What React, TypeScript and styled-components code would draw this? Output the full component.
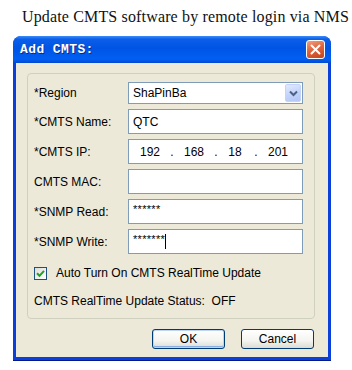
import React from 'react';
import styled, { createGlobalStyle } from 'styled-components';

const GlobalStyle = createGlobalStyle`
  html, body {
    margin: 0;
    padding: 0;
    background: #ffffff;
  }
`;

const Page = styled.div`
  width: 352px;
  height: 370px;
  overflow: hidden;
  display: flex;
  flex-direction: column;
`;

const Caption = styled.div`
  height: 36px;
  padding-left: 22px;
  display: flex;
  align-items: center;
  font-family: 'Liberation Serif', 'Times New Roman', serif;
  font-size: 16px;
  letter-spacing: 0.15px;
  color: #111;
  padding-bottom: 2px;
  box-sizing: border-box;
`;

const Window = styled.div`
  margin-left: 13px;
  width: 318px;
  height: 325px;
  display: flex;
  flex-direction: column;
  background: #0a3fd9;
  border-radius: 8px 8px 0 0;
  box-sizing: border-box;
  padding: 0 3px 3px 3px;
  border-bottom: 1px solid #001a8c;
`;

const TitleBar = styled.div`
  height: 27px;
  margin: 0 -3px;
  padding: 0 6px 0 7px;
  border-radius: 8px 8px 0 0;
  background: linear-gradient(
    180deg,
    #3c8cf6 0%,
    #0a5ee8 12%,
    #0054e3 45%,
    #0060f4 85%,
    #0048d0 100%
  );
  display: flex;
  align-items: center;
  justify-content: space-between;
`;

const Title = styled.span`
  font-family: 'Liberation Mono', 'DejaVu Sans Mono', monospace;
  font-weight: bold;
  font-size: 13px;
  letter-spacing: 0.4px;
  color: #ffffff;
  text-shadow: 1px 1px 0 #0a2a8a;
`;

const CloseButton = styled.div`
  width: 19px;
  height: 19px;
  box-sizing: border-box;
  border: 1px solid #ffffff;
  border-radius: 3px;
  background: linear-gradient(160deg, #f0a184 0%, #e0663f 45%, #c4421c 100%);
  display: flex;
  align-items: center;
  justify-content: center;
`;

const Body = styled.div`
  flex: 1;
  background: #ece9d8;
  padding: 10px 13px 0 11px;
  display: flex;
  flex-direction: column;
`;

const Group = styled.div`
  height: 246px;
  box-sizing: border-box;
  border: 1px solid #d0d0bf;
  border-radius: 4px;
  padding: 7px 11px 0 6px;
  display: flex;
  flex-direction: column;
`;

const Row = styled.div<{ gap: number }>`
  display: flex;
  align-items: center;
  margin-top: ${(p) => p.gap}px;
`;

const Label = styled.div`
  width: 94px;
  font-family: 'Liberation Sans', Arial, sans-serif;
  font-size: 12px;
  color: #000;
`;

const Field = styled.div<{ h: number }>`
  width: 175px;
  height: ${(p) => p.h}px;
  box-sizing: border-box;
  border: 1px solid #7f9db9;
  background: #ffffff;
  display: flex;
  align-items: center;
  padding-left: 4px;
  font-family: 'Liberation Sans', Arial, sans-serif;
  font-size: 12px;
  color: #000;
`;

const SelectArrow = styled.div`
  margin-left: auto;
  margin-right: 1px;
  width: 16px;
  height: 18px;
  box-sizing: border-box;
  border: 1px solid #c3d3fd;
  border-radius: 2px;
  background: linear-gradient(160deg, #e2eafe 0%, #c4d4fb 50%, #b2c6f6 100%);
  display: flex;
  align-items: center;
  justify-content: center;
`;

const IpPart = styled.span<{ w: number }>`
  display: inline-block;
  width: ${(p) => p.w}px;
  text-align: center;
`;

const Masked = styled.span`
  font-family: 'Liberation Sans', Arial, sans-serif;
  font-size: 11px;
  letter-spacing: 0.3px;
  position: relative;
  top: -3px;
`;

const Caret = styled.span`
  display: inline-block;
  width: 1px;
  height: 15px;
  background: #000;
  margin-left: 0;
`;

const CheckRow = styled.div`
  display: flex;
  align-items: center;
  margin-top: 12px;
  gap: 9px;
  font-family: 'Liberation Sans', Arial, sans-serif;
  font-size: 12px;
  color: #000;
`;

const CheckBox = styled.div`
  width: 13px;
  height: 13px;
  box-sizing: border-box;
  border: 1px solid #1c5180;
  background: linear-gradient(135deg, #dcdcd7 0%, #ffffff 100%);
  display: flex;
  align-items: center;
  justify-content: center;
`;

const Status = styled.div`
  margin-top: 14px;
  font-family: 'Liberation Sans', Arial, sans-serif;
  font-size: 12px;
  color: #000;
  white-space: pre;
`;

const Buttons = styled.div`
  display: flex;
  justify-content: flex-end;
  gap: 16px;
  margin-top: 10px;
  padding-right: 1px;
`;

const Button = styled.div<{ primary?: boolean }>`
  width: 73px;
  height: 20px;
  box-sizing: border-box;
  border: 1px solid #003c74;
  border-radius: 3px;
  background: linear-gradient(180deg, #ffffff 0%, #f4f4f0 60%, #dcdbd3 100%);
  box-shadow: ${(p) =>
    p.primary ? 'inset 0 0 0 1px #bcd4f6, inset 0 -1px 0 1px #89ade4' : 'none'};
  display: flex;
  align-items: center;
  justify-content: center;
  font-family: 'Liberation Sans', Arial, sans-serif;
  font-size: 12px;
  color: #000;
`;

const App = () => {
  return (
    <Page>
      <GlobalStyle />
      <Caption>Update CMTS software by remote login via NMS</Caption>
      <Window>
        <TitleBar>
          <Title>Add CMTS:</Title>
          <CloseButton>
            <svg width="11" height="11" viewBox="0 0 11 11">
              <path d="M1.5 1.5 L9.5 9.5 M9.5 1.5 L1.5 9.5" stroke="#fff" strokeWidth="2" strokeLinecap="round" />
            </svg>
          </CloseButton>
        </TitleBar>
        <Body>
          <Group>
            <Row gap={1}>
              <Label>*Region</Label>
              <Field h={22}>
                ShaPinBa
                <SelectArrow>
                  <svg width="9" height="7" viewBox="0 0 9 7">
                    <path d="M1 1.5 L4.5 5 L8 1.5" fill="none" stroke="#4d6185" strokeWidth="2" />
                  </svg>
                </SelectArrow>
              </Field>
            </Row>
            <Row gap={5}>
              <Label>*CMTS Name:</Label>
              <Field h={25}>QTC</Field>
            </Row>
            <Row gap={5}>
              <Label>*CMTS IP:</Label>
              <Field h={25}>
                <IpPart w={34}>192</IpPart>
                <IpPart w={10}>.</IpPart>
                <IpPart w={34}>168</IpPart>
                <IpPart w={10}>.</IpPart>
                <IpPart w={28}>18</IpPart>
                <IpPart w={14}>.</IpPart>
                <IpPart w={30}>201</IpPart>
              </Field>
            </Row>
            <Row gap={5}>
              <Label>CMTS MAC:</Label>
              <Field h={25} />
            </Row>
            <Row gap={5}>
              <Label>*SNMP Read:</Label>
              <Field h={25}>
                <Masked>******</Masked>
              </Field>
            </Row>
            <Row gap={5}>
              <Label>*SNMP Write:</Label>
              <Field h={25}>
                <Masked>*******</Masked>
                <Caret />
              </Field>
            </Row>
            <CheckRow>
              <CheckBox>
                <svg width="9" height="9" viewBox="0 0 9 9">
                  <path d="M1 4.2 L3.5 6.8 L8 1.8" fill="none" stroke="#21a121" strokeWidth="2" />
                </svg>
              </CheckBox>
              Auto Turn On CMTS RealTime Update
            </CheckRow>
            <Status>CMTS RealTime Update Status:  OFF</Status>
          </Group>
          <Buttons>
            <Button primary>OK</Button>
            <Button>Cancel</Button>
          </Buttons>
        </Body>
      </Window>
    </Page>
  );
};

export default App;
